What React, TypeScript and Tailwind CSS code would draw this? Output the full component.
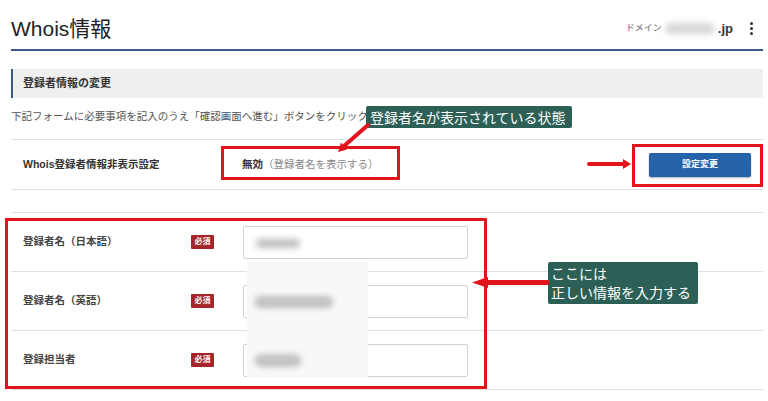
const rows = [
  { label: '登録者名（日本語）', blur: 'w-[44px]' },
  { label: '登録者名（英語）', blur: 'w-[76px]' },
  { label: '登録担当者', blur: 'w-[44px]' },
];

function RequiredBadge() {
  return (
    <span className="flex h-[14px] w-[23px] items-center justify-center rounded-[1px] bg-[#a5262a] text-[8px] font-bold leading-none text-white">
      必須
    </span>
  );
}

export default function App() {
  return (
    <div className="relative h-[401px] w-[768px] overflow-hidden bg-white font-['Liberation_Sans','Noto_Sans_CJK_JP',sans-serif] text-[#333]">
      <div className="pl-[11px] pr-[5px]">
        {/* Page header */}
        <header className="flex h-[51px] items-center justify-between border-b-2 border-[#3c5b8a] pt-[8px]">
          <h1 className="text-[21px] leading-none text-[#222]">Whois情報</h1>
          <div className="flex items-center">
            <span className="text-[9px] text-[#666]">ドメイン</span>
            <span className="mx-[3px] h-[11px] w-[50px] rounded-full bg-[#d6d6d6] blur-[3px]" />
            <span className="text-[13px] font-semibold leading-none text-[#333]">.jp</span>
            <span className="ml-[17px] mr-[10px] flex flex-col gap-[2px]">
              <span className="h-[3px] w-[3px] rounded-full bg-[#333]" />
              <span className="h-[3px] w-[3px] rounded-full bg-[#333]" />
              <span className="h-[3px] w-[3px] rounded-full bg-[#333]" />
            </span>
          </div>
        </header>

        {/* Section title */}
        <div className="mt-[18px] flex h-[29px] items-center border-l-2 border-[#3c5b8a] bg-[#efefef] pl-[10px] text-[11px] font-bold">
          登録者情報の変更
        </div>

        <p className="mt-[10px] whitespace-nowrap text-[10.5px] leading-[16px] text-[#555]">
          下記フォームに必要事項を記入のうえ「確認画面へ進む」ボタンをクリックしてください。
        </p>

        {/* Whois privacy setting */}
        <div className="mt-[15px] flex h-[51px] items-center border-y border-[#dde1e5]">
          <div className="w-[231px] pl-[12px] text-[10.5px] font-bold">Whois登録者情報非表示設定</div>
          <div className="flex-1 text-[10.5px]">
            <span className="font-bold">無効</span>
            <span className="text-[#888]">（登録者名を表示する）</span>
          </div>
          <button className="mr-[12px] h-[24px] w-[102px] rounded-[2px] bg-[#2462a9] text-[9px] font-bold text-white shadow-[0_1px_2px_rgba(0,0,0,0.3)]">
            設定変更
          </button>
        </div>

        {/* Registrant form */}
        <div className="mt-[22px] border-t border-[#dde1e5]">
          {rows.map((r) => (
            <div key={r.label} className="flex h-[59px] items-center border-b border-[#dde1e5]">
              <div className="w-[180px] pl-[12px] text-[10.5px] font-bold text-[#444]">{r.label}</div>
              <RequiredBadge />
              <div className="ml-[29px] flex h-[33px] w-[225px] items-center rounded-[2px] border border-[#cfd3d8] bg-white pl-[12px] pt-[2px]">
                <span className={`relative z-20 h-[9px] ${r.blur} rounded-full bg-[#bdbdbd] blur-[3px]`} />
              </div>
            </div>
          ))}
        </div>
      </div>

      {/* blurred overlay patch */}
      <div className="absolute left-[247px] top-[262px] z-10 h-[115px] w-[121px] bg-[#f7f8fa]" />
      <span className="absolute left-[256px] top-[297px] z-20 h-[9px] w-[76px] rounded-full bg-[#c4c4c4] blur-[3px]" />
      <span className="absolute left-[256px] top-[355px] z-20 h-[9px] w-[44px] rounded-full bg-[#c4c4c4] blur-[3px]" />

      {/* annotations */}
      <div className="absolute left-[221px] top-[146px] z-30 h-[34px] w-[179px] border-[3px] border-[#e2141c]" />
      <div className="absolute left-[632px] top-[144px] z-30 h-[43px] w-[131px] border-[3px] border-[#e2141c]" />
      <div className="absolute left-[5px] top-[218px] z-30 h-[171px] w-[482px] border-[3px] border-[#e2141c]" />

      <div className="absolute left-[366px] top-[106px] z-30 flex h-[22px] w-[206px] items-center rounded-[2px] bg-[#2c5f55] pl-[4px] font-['Noto_Sans_CJK_JP',sans-serif] text-[14px] leading-none text-white">
        登録者名が表示されている状態
      </div>
      <div className="absolute left-[548px] top-[262px] z-30 flex h-[42px] w-[150px] flex-col justify-center rounded-[2px] bg-[#2c5f55] pl-[3px] font-['Noto_Sans_CJK_JP',sans-serif] text-[14px] leading-[19px] text-white">
        <span>ここには</span>
        <span>正しい情報を入力する</span>
      </div>

      <svg className="absolute left-[334px] top-[120px] z-30" width="40" height="34" viewBox="0 0 40 34">
        <line x1="34" y1="5" x2="10" y2="26" stroke="#e2141c" strokeWidth="4" strokeLinecap="round" />
        <polygon points="4,32 13,29.5 7,22.5" fill="#e2141c" />
      </svg>
      <svg className="absolute left-[586px] top-[158px] z-30" width="46" height="12" viewBox="0 0 46 12">
        <line x1="3" y1="6" x2="38" y2="6" stroke="#e2141c" strokeWidth="4" strokeLinecap="round" />
        <polygon points="37,1 45,6 37,11" fill="#e2141c" />
      </svg>
      <svg className="absolute left-[471px] top-[276px] z-30" width="78" height="13" viewBox="0 0 78 13">
        <line x1="14" y1="6.5" x2="78" y2="6.5" stroke="#e2141c" strokeWidth="5" />
        <polygon points="1,6.5 17,1 17,12" fill="#e2141c" />
      </svg>
    </div>
  );
}
